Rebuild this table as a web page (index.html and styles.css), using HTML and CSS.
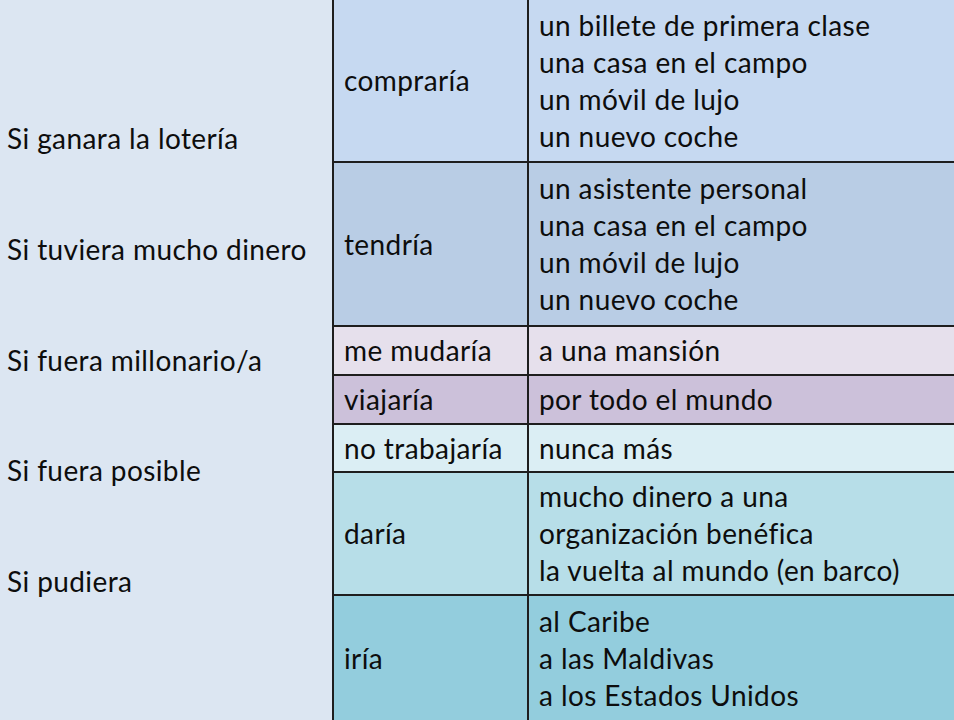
FILE: index.html
```html
<!DOCTYPE html>
<html lang="es">
<head>
<meta charset="utf-8">
<link rel="stylesheet" href="styles.css">
</head>
<body>
<div class="slide">
  <div class="conds">
    <div class="cond">Si ganara la lotería</div>
    <div class="cond">Si tuviera mucho dinero</div>
    <div class="cond">Si fuera millonario/a</div>
    <div class="cond">Si fuera posible</div>
    <div class="cond">Si pudiera</div>
  </div>
  <div class="grid">
    <div class="cell r1">compraría</div>
    <div class="cell r1">un billete de primera clase<br>una casa en el campo<br>un móvil de lujo<br>un nuevo coche</div>
    <div class="cell r2">tendría</div>
    <div class="cell r2">un asistente personal<br>una casa en el campo<br>un móvil de lujo<br>un nuevo coche</div>
    <div class="cell r3">me mudaría</div>
    <div class="cell r3">a una mansión</div>
    <div class="cell r4">viajaría</div>
    <div class="cell r4">por todo el mundo</div>
    <div class="cell r5">no trabajaría</div>
    <div class="cell r5">nunca más</div>
    <div class="cell r6">daría</div>
    <div class="cell r6">mucho dinero a una<br>organización benéfica<br>la vuelta al mundo (en barco)</div>
    <div class="cell r7">iría</div>
    <div class="cell r7">al Caribe<br>a las Maldivas<br>a los Estados Unidos</div>
  </div>
</div>
</body>
</html>
```
FILE: styles.css
```css
html, body {
  margin: 0;
  padding: 0;
}
body {
  width: 954px;
  height: 720px;
  overflow: hidden;
  font-family: Lato, "Liberation Sans", sans-serif;
  font-size: 28px;
  line-height: 37px;
  letter-spacing: 0.4px;
  color: #0d0d0d;
}
.slide {
  display: flex;
  width: 954px;
  height: 720px;
}
.conds {
  width: 332px;
  flex: none;
  background: #dce6f2;
  display: flex;
  flex-direction: column;
  justify-content: center;
  gap: 73.75px;
  padding-left: 7px;
  box-sizing: border-box;
  white-space: nowrap;
}
.grid {
  flex: 1;
  display: grid;
  grid-template-columns: 193px 1fr;
  grid-template-rows: 161px 162px 47px 47px 46px 121px 124px;
  gap: 2px;
  background: #1e1e1e;
  padding-left: 2px;
}
.cell {
  display: flex;
  align-items: center;
  padding-left: 10px;
  white-space: nowrap;
}
.r1 { background: #c6d9f1; }
.r2 { background: #b9cde5; }
.r3 { background: #e6e0ec; }
.r4 { background: #ccc1da; }
.r5 { background: #dbeef4; }
.r6 { background: #b7dee8; }
.r7 { background: #93cddd; }
```
